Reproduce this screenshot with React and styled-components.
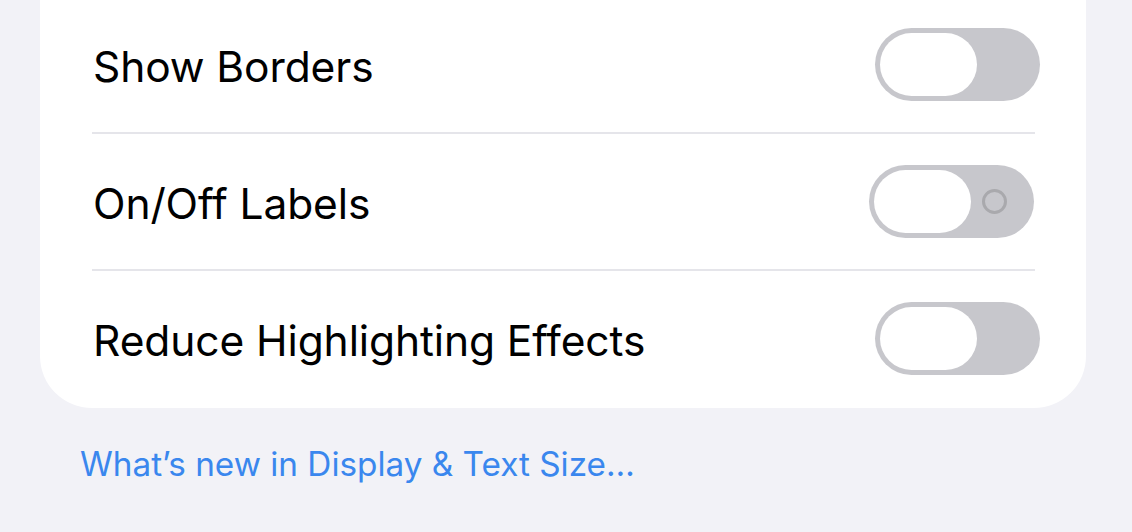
import React from 'react';
import styled, { createGlobalStyle } from 'styled-components';

const GlobalStyle = createGlobalStyle`
  html, body {
    margin: 0;
    padding: 0;
    background: #f2f2f7;
    font-family: 'Inter', 'Noto Sans', sans-serif;
    -webkit-font-smoothing: antialiased;
  }
`;

const Page = styled.div`
  width: 1132px;
  height: 532px;
  overflow: hidden;
  padding: 0 46px 0 40px;
  box-sizing: border-box;
`;

const Card = styled.div`
  margin-top: -3px;
  padding: 0 46px 2px 52px;
  background: #fff;
  border-radius: 0 0 52px 52px;
`;

const Row = styled.div`
  display: flex;
  align-items: center;
  justify-content: space-between;
  height: 135px;
`;

const Separator = styled.div`
  height: 2px;
  margin-right: 5px;
  background: #e5e5ea;
`;

const Label = styled.span`
  font-size: 42.5px;
  color: #000;
  letter-spacing: -0.1px;
  padding: 3px 0 0 1px;
`;

const Track = styled.div`
  position: relative;
  width: 165px;
  height: 73px;
  border-radius: 37px;
  background: #c7c7cc;
  margin-right: ${p => (p.shift ? '6px' : '0')};
  flex-shrink: 0;
`;

const Knob = styled.div`
  position: absolute;
  left: 5px;
  top: 5px;
  width: 97px;
  height: 63px;
  border-radius: 32px;
  background: #fff;
`;

const OffMark = styled.div`
  position: absolute;
  right: 27px;
  top: 24px;
  width: 19px;
  height: 19px;
  border-radius: 50%;
  border: 3px solid #a9a9ad;
`;

const Footer = styled.a`
  display: block;
  margin: 36px 0 0 40px;
  font-size: 33.3px;
  color: #3a87ee;
  text-decoration: none;
`;

const Toggle = ({ labels, shift }) => (
  <Track shift={shift}>
    <Knob />
    {labels && <OffMark />}
  </Track>
);

const rows = [
  { label: 'Show Borders' },
  { label: 'On/Off Labels', labels: true, shift: true },
  { label: 'Reduce Highlighting Effects' },
];

export default function App() {
  return (
    <>
      <GlobalStyle />
      <Page>
        <Card>
          {rows.map((r, i) => (
            <React.Fragment key={r.label}>
              {i > 0 && <Separator />}
              <Row>
                <Label>{r.label}</Label>
                <Toggle labels={r.labels} shift={r.shift} />
              </Row>
            </React.Fragment>
          ))}
        </Card>
        <Footer>What’s new in Display &amp; Text Size…</Footer>
      </Page>
    </>
  );
}
